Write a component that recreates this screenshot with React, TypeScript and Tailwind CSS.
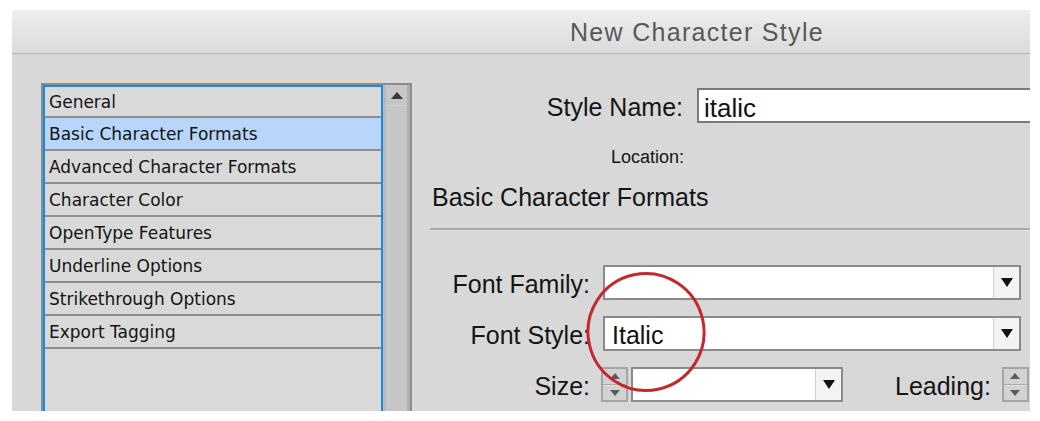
import React from 'react'

const SECTIONS = [
  'General',
  'Basic Character Formats',
  'Advanced Character Formats',
  'Character Color',
  'OpenType Features',
  'Underline Options',
  'Strikethrough Options',
  'Export Tagging',
]

function DownArrow() {
  return (
    <svg viewBox="0 0 12 9" className="h-[9px] w-[12px]" aria-hidden="true">
      <path d="M0 0h12L6 9z" fill="#111" />
    </svg>
  )
}

function Stepper() {
  return (
    <div className="flex h-[35px] w-[27px] shrink-0 flex-col border-2 border-[#a4a4a4] bg-[#d2d2d2]">
      <div className="flex flex-1 items-center justify-center border-b border-[#a8a8a8]">
        <svg viewBox="0 0 10 6" className="h-[6px] w-[10px]" aria-hidden="true">
          <path d="M5 0l5 6H0z" fill="#5c5c5c" />
        </svg>
      </div>
      <div className="flex flex-1 items-center justify-center border-t border-[#e4e4e4]">
        <svg viewBox="0 0 10 6" className="h-[6px] w-[10px]" aria-hidden="true">
          <path d="M0 0h10L5 6z" fill="#5c5c5c" />
        </svg>
      </div>
    </div>
  )
}

function Dropdown({ value, width }: { value?: string; width: string }) {
  return (
    <div className={`flex h-[35px] shrink-0 border-2 border-[#8a8a8a] bg-white ${width}`}>
      <div className="flex flex-1 items-center pl-[7px] pt-[3px] text-[25px] leading-none text-[#111]">
        {value}
      </div>
      <div className="flex w-[26px] items-center justify-center border-l border-[#cfcfcf] bg-[#f3f3f3]">
        <DownArrow />
      </div>
    </div>
  )
}

export default function App() {
  return (
    <div className="min-h-screen bg-white pl-[12px] pt-[10px]" style={{ fontFamily: '"Liberation Sans", Arial, sans-serif' }}>
      <div className="relative flex h-[401px] w-[1018px] flex-col overflow-hidden rounded-tl-[4px] bg-[#d8d8d8]">
        {/* title bar */}
        <div className="flex h-[44px] shrink-0 items-center border-b border-[#b4b4b4] bg-gradient-to-b from-[#eeeeee] to-[#dbdbdb] pl-[558px] pt-[3px]">
          <span className="text-[25px] tracking-[1.3px] text-[#585858]">New Character Style</span>
        </div>

        <div className="flex min-h-0 flex-1">
          {/* section list */}
          <div className="shrink-0 pl-[29px] pt-[29px]">
            <div className="flex h-[360px] w-[371px] border-2 border-[#8c8c8c]">
              <div
                className="w-[340px] shrink-0 border-2 border-[#1b8ae6] bg-[#d9d9d9]"
                style={{ fontFamily: '"DejaVu Sans", Verdana, sans-serif' }}
              >
                {SECTIONS.map((s, i) => (
                  <div
                    key={s}
                    className={`flex items-center border-b-2 border-[#8e8e8e] pl-[4px] pt-[2px] text-[17px] text-[#141414] ${
                      i === 0 ? 'h-[31px]' : 'h-[33px]'
                    } ${i === 1 ? 'bg-[#b8d6fb]' : ''}`}
                  >
                    {s}
                  </div>
                ))}
              </div>
              <div className="flex flex-1 flex-col border-l-[3px] border-[#b9b9b9] border-r-[3px] border-r-[#b0b0b0] bg-[#c6c6c6]">
                <div className="flex h-[21px] items-center justify-center border-b border-[#d2d2d2]">
                  <svg viewBox="0 0 12 7" className="h-[7px] w-[12px]" aria-hidden="true">
                    <path d="M6 0l6 7H0z" fill="#3a3a3a" />
                  </svg>
                </div>
              </div>
            </div>
          </div>

          {/* form */}
          <div className="ml-[18px] min-w-0 flex-1 text-[#151515]">
            <div className="mt-[34px] flex items-center">
              <div className="w-[253px] shrink-0 pt-[4px] text-right text-[25px] leading-none">Style Name:</div>
              <div className="ml-[14px] flex h-[35px] w-[360px] shrink-0 items-center border-2 border-[#7a7a7a] bg-white pl-[5px] pt-[4px] text-[26px] leading-none text-[#111]">
                italic
              </div>
            </div>

            <div className="mt-[24px] w-[254px] text-right text-[18px] leading-[20px]">Location:</div>

            <div className="mt-[15px] pl-[2px] text-[25px] leading-[30px]">Basic Character Formats</div>

            <div className="mt-[16px] border-t-2 border-b border-t-[#a8a8a8] border-b-[#e2e2e2]" />

            <div className="mt-[34px] flex items-center">
              <div className="w-[160px] shrink-0 pt-[4px] text-right text-[25px] leading-none">Font Family:</div>
              <div className="ml-[13px]">
                <Dropdown width="w-[418px]" />
              </div>
            </div>

            <div className="mt-[16px] flex items-center">
              <div className="w-[160px] shrink-0 pt-[4px] text-right text-[25px] leading-none">Font Style:</div>
              <div className="ml-[13px]">
                <Dropdown width="w-[418px]" value="Italic" />
              </div>
            </div>

            <div className="mt-[16px] flex items-center">
              <div className="w-[160px] shrink-0 pt-[4px] text-right text-[25px] leading-none">Size:</div>
              <div className="ml-[11px] flex items-center gap-[3px]">
                <Stepper />
                <Dropdown width="w-[212px]" />
              </div>
              <div className="ml-[52px] shrink-0 pt-[4px] text-[25px] leading-none">Leading:</div>
              <div className="ml-[11px]">
                <Stepper />
              </div>
            </div>
          </div>
        </div>

        {/* annotation circle */}
        <svg
          viewBox="0 0 124 124"
          className="pointer-events-none absolute left-[572px] top-[260px] h-[124px] w-[124px]"
          aria-hidden="true"
        >
          <ellipse cx="62" cy="62" rx="58" ry="58.5" transform="rotate(-12 62 62)" fill="none" stroke="#c3282e" strokeWidth="3" />
        </svg>
      </div>
    </div>
  )
}
